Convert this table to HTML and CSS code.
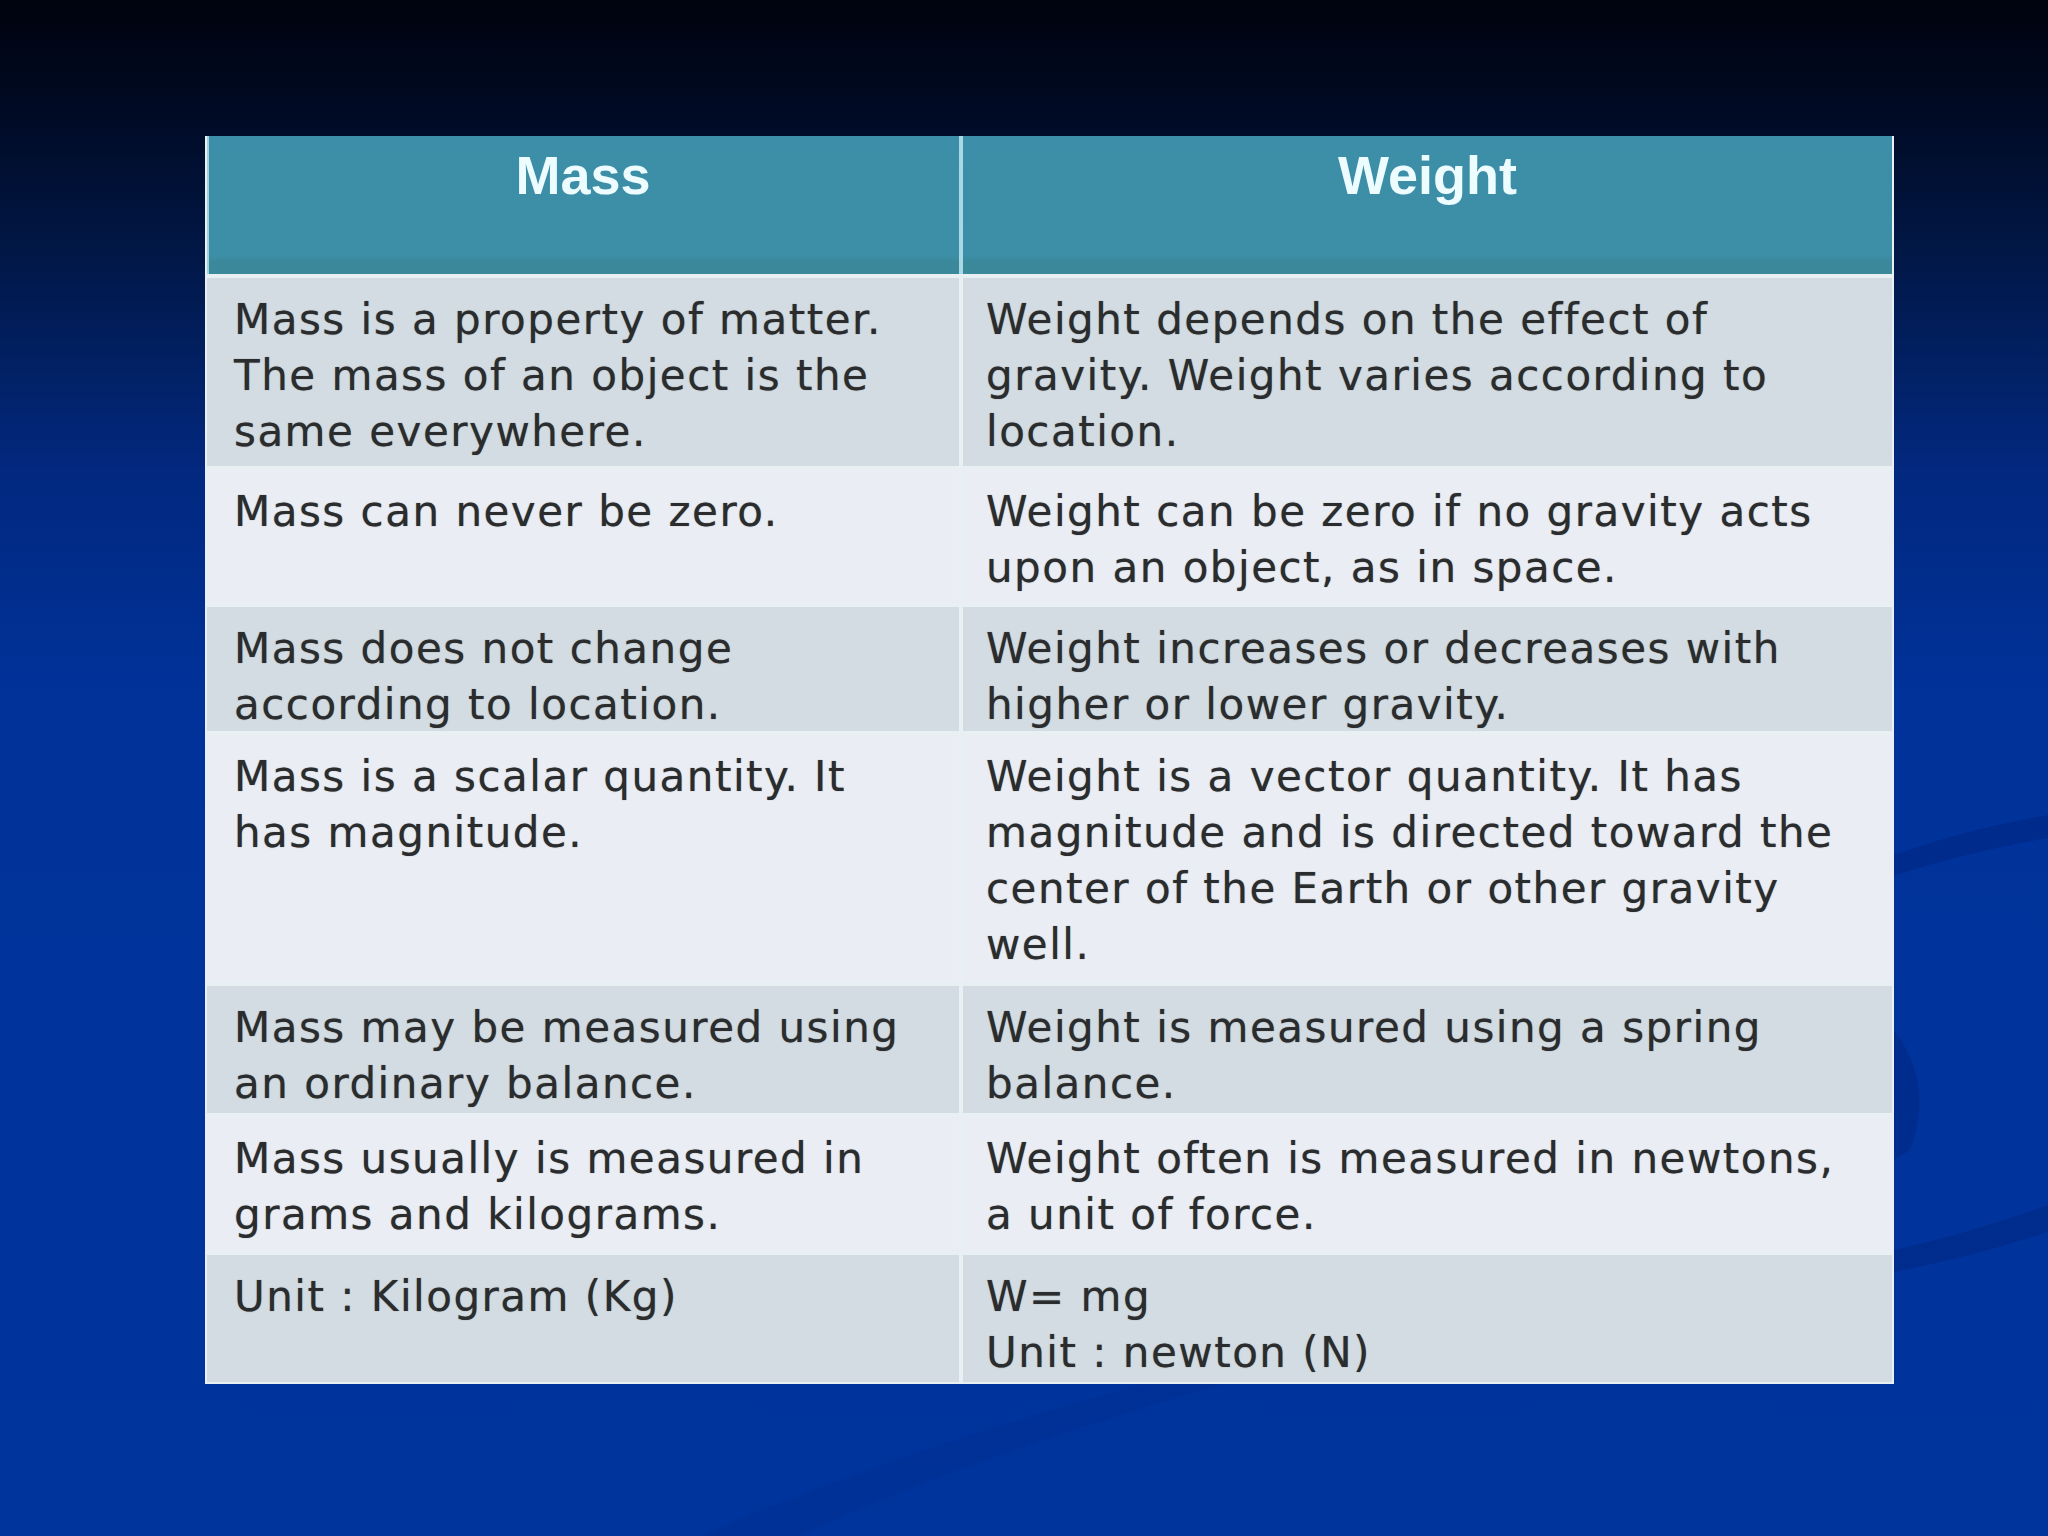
FILE: index.html
```html
<!DOCTYPE html>
<html lang="en">
<head>
<meta charset="utf-8">
<title>Mass vs Weight</title>
<link rel="stylesheet" href="styles.css">
</head>
<body>
<main class="slide">
  <div class="table">
    <div class="hcell">Mass</div>
    <div class="hcell">Weight</div>

    <div class="cell odd">Mass is a property of matter.<br>The mass of an object is the<br>same everywhere.</div>
    <div class="cell odd">Weight depends on the effect of<br>gravity. Weight varies according to<br>location.</div>

    <div class="cell even">Mass can never be zero.</div>
    <div class="cell even">Weight can be zero if no gravity acts<br>upon an object, as in space.</div>

    <div class="cell odd">Mass does not change<br>according to location.</div>
    <div class="cell odd">Weight increases or decreases with<br>higher or lower gravity.</div>

    <div class="cell even">Mass is a scalar quantity. It<br>has magnitude.</div>
    <div class="cell even">Weight is a vector quantity. It has<br>magnitude and is directed toward the<br>center of the Earth or other gravity<br>well.</div>

    <div class="cell odd">Mass may be measured using<br>an ordinary balance.</div>
    <div class="cell odd">Weight is measured using a spring<br>balance.</div>

    <div class="cell even">Mass usually is measured in<br>grams and kilograms.</div>
    <div class="cell even">Weight often is measured in newtons,<br>a unit of force.</div>

    <div class="cell odd">Unit : Kilogram (Kg)</div>
    <div class="cell odd">W= mg<br>Unit : newton (N)</div>
  </div>
</main>
</body>
</html>
```

FILE: styles.css
```css
html, body {
  margin: 0;
  padding: 0;
}

body {
  width: 2048px;
  height: 1536px;
  overflow: hidden;
  background-color: #00349d;
  background-image:
    url("data:image/svg+xml;utf8,<svg xmlns='http://www.w3.org/2000/svg' width='2048' height='1536' viewBox='0 0 2048 1536'><g fill='rgb(0,30,110)' fill-opacity='0.3'><path d='M1880 860 Q1960 830 2048 815 L2048 838 Q1965 852 1880 880 Z'/><path d='M1894 1030 Q1935 1085 1910 1150 L1894 1160 Z'/><path d='M1894 1250 Q1975 1232 2048 1205 L2048 1232 Q1975 1256 1894 1272 Z'/></g><path d='M700 1536 Q900 1450 1150 1382 L1230 1382 Q960 1460 800 1536 Z' fill='rgb(0,40,130)' fill-opacity='0.2'/></svg>"),
    linear-gradient(to bottom, #00030d 0px, #000a24 110px, #011848 260px, #02287f 470px, #00329a 700px, #00349d 1536px);
  background-repeat: no-repeat;
  font-family: "DejaVu Sans", "Liberation Sans", sans-serif;
}

.slide {
  padding: 136px 0 0 205px;
}

.table {
  width: 1689px;
  box-sizing: border-box;
  display: grid;
  grid-template-columns: 752px 929px;
  grid-template-rows: 138px 188px 133px 124px 247px 127px 134px 127px;
  column-gap: 4px;
  row-gap: 4px;
  padding: 0 2px 2px 2px;
  background: #e9f0f3;
}

.hcell {
  background: linear-gradient(to bottom, #3d8ea8 0px, #3c8fa6 120px, #3a8899 126px, #3b8a9c 138px);
  color: #ecfcff;
  font-family: "Liberation Sans", Arial, sans-serif;
  font-weight: bold;
  font-size: 54px;
  line-height: 54px;
  text-align: center;
  padding-top: 12px;
  box-sizing: border-box;
}

.table .hcell:first-child {
  box-shadow: inset 2px 0 0 #9fd2df, 4px 0 0 #a8d8e4;
}

.cell {
  box-sizing: border-box;
  padding-top: 14px;
  font-size: 42px;
  line-height: 56px;
  letter-spacing: 1.5px;
  color: #2a2c2e;
  text-shadow: 0 0 1px rgba(30, 30, 30, 0.55);
  white-space: nowrap;
}

.cell:nth-child(odd) {
  padding-left: 27px;
}

.cell:nth-child(even) {
  padding-left: 23px;
}

.odd {
  background: #d3dce2;
}

.even {
  background: #eaedf3;
}
```
